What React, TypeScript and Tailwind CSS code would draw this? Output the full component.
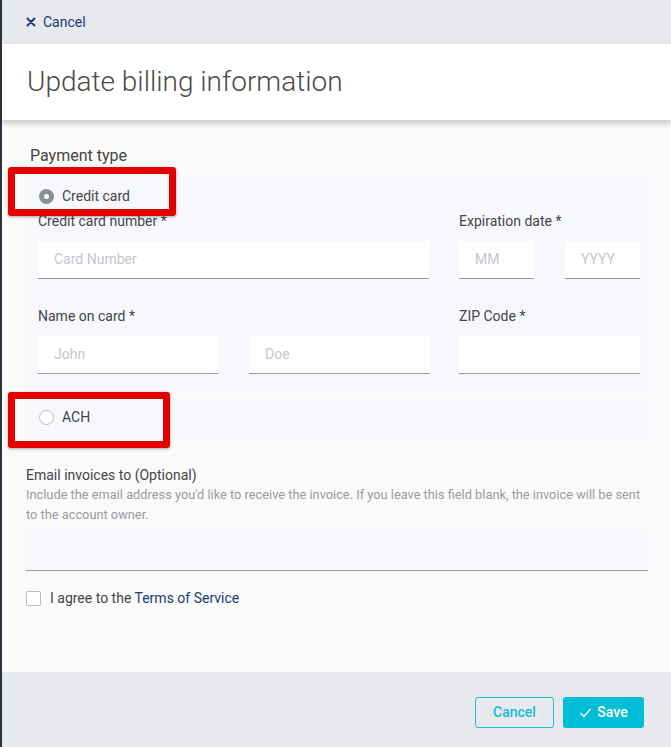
import React from "react";

function Radio({ checked }: { checked?: boolean }) {
  return checked ? (
    <span className="flex h-[15px] w-[15px] items-center justify-center rounded-full bg-[#8b909a]">
      <span className="h-[5px] w-[5px] rounded-full bg-white" />
    </span>
  ) : (
    <span className="h-[15px] w-[15px] rounded-full border-[1.5px] border-[#b9bec6] bg-white" />
  );
}

function Input({ placeholder, className }: { placeholder?: string; className?: string }) {
  return (
    <div
      className={
        "flex h-[38px] items-center border-b border-[#9a9a9a] bg-white pl-[16px] text-[14px] text-[#c4c7cc] " +
        (className || "")
      }
    >
      {placeholder}
    </div>
  );
}

export default function App() {
  return (
    <div
      className="flex min-h-[747px] w-[671px] text-[#454545]"
      style={{ fontFamily: "Roboto, 'Liberation Sans', sans-serif" }}
    >
      <div className="w-[2px] shrink-0 bg-[#2a3342]" />
      <div className="relative flex flex-1 flex-col bg-[#fafafa]">
        {/* top bar */}
        <div className="flex h-[44px] items-center gap-[6px] bg-[#e8e9ed] pl-[23px] text-[14px] text-[#1c3b78]">
          <svg width="12" height="12" viewBox="0 0 12 12">
            <path d="M2.5 2.5 L9.5 9.5 M9.5 2.5 L2.5 9.5" stroke="#1c3b78" strokeWidth="2" strokeLinecap="round" />
          </svg>
          <span>Cancel</span>
        </div>
        {/* header */}
        <div className="relative z-10 flex h-[76px] items-center bg-white pl-[25px] shadow-[0_3px_6px_rgba(0,0,0,0.22)]">
          <h1 className="text-[28px] font-light leading-none text-[#4a4a4a]">Update billing information</h1>
        </div>
        {/* content */}
        <div className="flex flex-1 flex-col px-[24px] pt-[26px]">
          <div className="ml-[4px] text-[16px] leading-[20px] text-[#454545]">Payment type</div>
          <div className="mt-[11px] w-[622px] bg-[#f7f8fd] pb-[18px] pl-[12px] pr-[8px] pt-[9px]">
            <div className="flex h-[20px] items-center gap-[8px] pl-[1px]">
              <Radio checked />
              <span className="text-[14px] text-[#454545]">Credit card</span>
            </div>
            <div className="mt-[5px] flex gap-[30px]">
              <div className="w-[391px]">
                <div className="text-[14px] leading-[20px]">Credit card number *</div>
                <Input placeholder="Card Number" className="mt-[10px]" />
              </div>
              <div className="w-[181px]">
                <div className="text-[14px] leading-[20px]">Expiration date *</div>
                <div className="mt-[10px] flex gap-[31px]">
                  <Input placeholder="MM" className="w-[75px]" />
                  <Input placeholder="YYYY" className="w-[75px]" />
                </div>
              </div>
            </div>
            <div className="mt-[27px] flex gap-[29px]">
              <div className="w-[392px]">
                <div className="text-[14px] leading-[20px]">Name on card *</div>
                <div className="mt-[10px] flex gap-[31px]">
                  <Input placeholder="John" className="w-[180px]" />
                  <Input placeholder="Doe" className="w-[181px]" />
                </div>
              </div>
              <div className="w-[181px]">
                <div className="text-[14px] leading-[20px]">ZIP Code *</div>
                <Input className="mt-[10px]" />
              </div>
            </div>
          </div>
          <div className="mt-[6px] flex h-[41px] w-[622px] items-center gap-[8px] bg-[#f7f8fd] pb-[2px] pl-[13px]">
            <Radio />
            <span className="text-[14px] text-[#454545]">ACH</span>
          </div>
          <div className="mt-[26px] text-[14px] leading-[20px] text-[#454545]">Email invoices to (Optional)</div>
          <div className="text-[12.8px] leading-[20px] text-[#9a9ca1]">
            Include the email address you'd like to receive the invoice. If you leave this field blank, the invoice will be sent
            to the account owner.
          </div>
          <div className="mt-[6px] h-[40px] w-[622px] border-b border-[#9a9a9a] bg-[#f7f8fd]" />
          <div className="mt-[17px] flex h-[20px] items-center gap-[9px]">
            <span className="h-[15px] w-[15px] rounded-[2px] border-[1.5px] border-[#b9bdc4] bg-white" />
            <span className="text-[14px] text-[#454545]">
              I agree to the <span className="text-[#1c3b78]">Terms of Service</span>
            </span>
          </div>
        </div>
        {/* footer */}
        <div className="mt-[60px] flex h-[75px] justify-end gap-[9px] bg-[#e8e9ed] pr-[28px] pt-[25px]">
          <button className="h-[31px] w-[79px] rounded-[3px] border border-[#1ebfd8] text-[14px] font-medium text-[#16bcd6]">
            Cancel
          </button>
          <button className="flex h-[31px] w-[81px] items-center justify-center gap-[5px] rounded-[3px] bg-[#00bed6] text-[14px] font-medium text-white">
            <svg width="13" height="13" viewBox="0 0 13 13">
              <path d="M1.5 7 L5 10.5 L11.5 3" stroke="white" strokeWidth="1.4" fill="none" />
            </svg>
            Save
          </button>
        </div>

        {/* annotation boxes */}
        <div className="pointer-events-none absolute left-[6px] top-[167px] h-[49px] w-[168px] rounded-[3px] border-[7px] border-[#e20000] shadow-[0_1px_3px_rgba(0,0,0,0.35)]" />
        <div className="pointer-events-none absolute left-[6px] top-[392px] h-[56px] w-[162px] rounded-[3px] border-[7px] border-[#e20000] shadow-[0_1px_3px_rgba(0,0,0,0.35)]" />
      </div>
    </div>
  );
}
